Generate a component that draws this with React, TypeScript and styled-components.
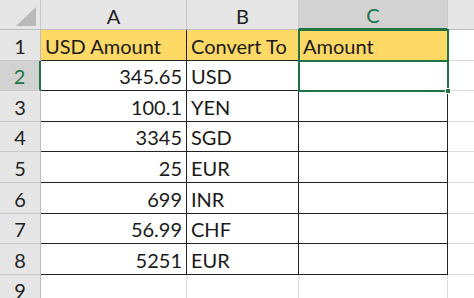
import { Fragment } from "react";
import styled, { createGlobalStyle } from "styled-components";

const GlobalStyle = createGlobalStyle`
  html, body {
    margin: 0;
    padding: 0;
    background: #ffffff;
    overflow: hidden;
  }
  body {
    font-family: Lato, "Liberation Sans", sans-serif;
  }
`;

const green = "#217346";

const Sheet = styled.div`
  position: relative;
  display: grid;
  grid-template-columns: 41px 146px 112px 149px 40px;
  grid-template-rows: 30px repeat(9, 30.6px);
  width: 474px;
  height: 298px;
  overflow: hidden;
  font-size: 20px;
  color: #1a1a1a;
`;

const Corner = styled.div`
  position: relative;
  background: #e6e6e6;
  border-right: 1px solid #c8c8c8;
  border-bottom: 1px solid #bcbcbc;
  box-sizing: border-box;
`;

const Triangle = styled.div`
  position: absolute;
  right: 4px;
  bottom: 3px;
  width: 0;
  height: 0;
  border-left: 20px solid transparent;
  border-bottom: 19px solid #b9b9b9;
`;

const ColHead = styled.div<{ active?: boolean }>`
  display: flex;
  align-items: center;
  justify-content: center;
  box-sizing: border-box;
  background: ${(p) => (p.active ? "#d2d2d2" : "#e6e6e6")};
  color: ${(p) => (p.active ? green : "#222")};
  border-right: 1px solid #c8c8c8;
  border-bottom: ${(p) => (p.active ? `2px solid ${green}` : "1px solid #bcbcbc")};
  padding-top: 2px;
`;

const RowHead = styled.div<{ active?: boolean }>`
  display: flex;
  align-items: flex-end;
  justify-content: center;
  box-sizing: border-box;
  padding-bottom: 2px;
  background: ${(p) => (p.active ? "#d2d2d2" : "#e6e6e6")};
  color: ${(p) => (p.active ? green : "#222")};
  border-right: ${(p) => (p.active ? `2px solid ${green}` : "1px solid #bcbcbc")};
  border-bottom: 1px solid #c8c8c8;
`;

const Cell = styled.div<{ head?: boolean; num?: boolean; table?: boolean }>`
  display: flex;
  align-items: flex-end;
  justify-content: ${(p) => (p.num ? "flex-end" : "flex-start")};
  box-sizing: border-box;
  padding: 0 4px 2px 4px;
  white-space: nowrap;
  background: ${(p) => (p.head ? "#ffd966" : "#ffffff")};
  border-right: 1px solid ${(p) => (p.table ? "#222" : "#dadada")};
  border-bottom: 1px solid ${(p) => (p.table ? "#222" : "#dadada")};
`;

const Selection = styled.div`
  position: absolute;
  left: 298px;
  top: 29px;
  width: 151px;
  height: 63px;
  box-sizing: border-box;
  border: 2px solid ${green};
  pointer-events: none;
`;

const ActiveCell = styled.div`
  position: absolute;
  left: 298px;
  top: 60px;
  width: 151px;
  height: 32px;
  box-sizing: border-box;
  border: 2px solid ${green};
  pointer-events: none;
`;

const Handle = styled.div`
  position: absolute;
  left: 445px;
  top: 88px;
  width: 6px;
  height: 6px;
  background: ${green};
  border: 1px solid #ffffff;
  box-sizing: border-box;
`;

const rows: [string, string][] = [
  ["345.65", "USD"],
  ["100.1", "YEN"],
  ["3345", "SGD"],
  ["25", "EUR"],
  ["699", "INR"],
  ["56.99", "CHF"],
  ["5251", "EUR"],
];

export default function App() {
  return (
    <>
      <GlobalStyle />
      <Sheet>
        <Corner>
          <Triangle />
        </Corner>
        <ColHead>A</ColHead>
        <ColHead>B</ColHead>
        <ColHead active>C</ColHead>
        <ColHead />

        <RowHead>1</RowHead>
        <Cell head table>USD Amount</Cell>
        <Cell head table>Convert To</Cell>
        <Cell head table>Amount</Cell>
        <Cell />

        {rows.map(([amount, cur], i) => (
          <Fragment key={i}>
            <RowHead active={i === 0}>{i + 2}</RowHead>
            <Cell num table>
              {amount}
            </Cell>
            <Cell table>{cur}</Cell>
            <Cell table />
            <Cell />
          </Fragment>
        ))}

        <RowHead>9</RowHead>
        <Cell />
        <Cell />
        <Cell />
        <Cell />

        <Selection />
        <ActiveCell />
        <Handle />
      </Sheet>
    </>
  );
}
